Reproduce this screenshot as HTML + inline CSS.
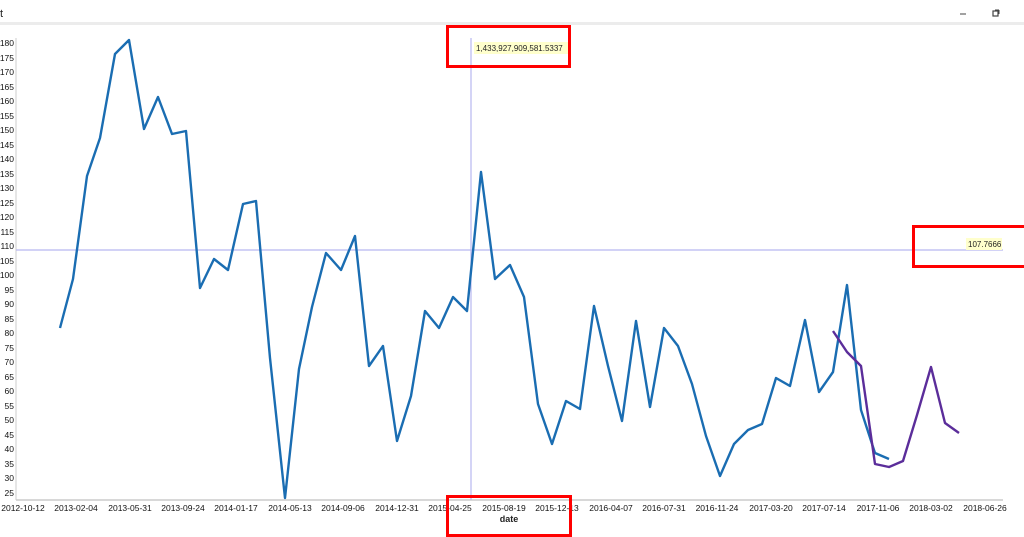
<!DOCTYPE html>
<html><head><style>
html,body{margin:0;padding:0;width:1024px;height:537px;overflow:hidden;background:#fff;font-family:"Liberation Sans",Arial,sans-serif}
</style></head><body>
<svg width="1024" height="537" xmlns="http://www.w3.org/2000/svg" style="position:absolute;left:0;top:0">
<text x="0" y="17" font-size="11" fill="#222">t</text>
<rect x="0" y="22" width="1024" height="3" fill="#ececec"/>
<line x1="960" y1="14" x2="966" y2="14" stroke="#444" stroke-width="1"/>
<rect x="993" y="11" width="5" height="5" fill="none" stroke="#444" stroke-width="1.2"/>
<line x1="995" y1="10" x2="999" y2="10" stroke="#444"/><line x1="999" y1="10" x2="999" y2="14" stroke="#444"/>
<g font-size="8.5" fill="#111" text-anchor="end" font-family="Liberation Sans,Arial,sans-serif">
<text x="14" y="46">180</text><text x="14" y="61">175</text><text x="14" y="75">170</text><text x="14" y="90">165</text><text x="14" y="104">160</text><text x="14" y="119">155</text><text x="14" y="133">150</text><text x="14" y="148">145</text><text x="14" y="162">140</text><text x="14" y="177">135</text><text x="14" y="191">130</text><text x="14" y="206">125</text><text x="14" y="220">120</text><text x="14" y="235">115</text><text x="14" y="249">110</text><text x="14" y="264">105</text><text x="14" y="278">100</text><text x="14" y="293">95</text><text x="14" y="307">90</text><text x="14" y="322">85</text><text x="14" y="336">80</text><text x="14" y="351">75</text><text x="14" y="365">70</text><text x="14" y="380">65</text><text x="14" y="394">60</text><text x="14" y="409">55</text><text x="14" y="423">50</text><text x="14" y="438">45</text><text x="14" y="452">40</text><text x="14" y="467">35</text><text x="14" y="481">30</text><text x="14" y="496">25</text>
</g>
<line x1="16" y1="38" x2="16" y2="500" stroke="#ccc"/>
<line x1="16" y1="500" x2="1003" y2="500" stroke="#ccc" stroke-width="1.5"/>
<g font-size="8.5" fill="#111" text-anchor="middle">
<text x="23" y="511">2012-10-12</text><text x="76" y="511">2013-02-04</text><text x="130" y="511">2013-05-31</text><text x="183" y="511">2013-09-24</text><text x="236" y="511">2014-01-17</text><text x="290" y="511">2014-05-13</text><text x="343" y="511">2014-09-06</text><text x="397" y="511">2014-12-31</text><text x="450" y="511">2015-04-25</text><text x="504" y="511">2015-08-19</text><text x="557" y="511">2015-12-13</text><text x="611" y="511">2016-04-07</text><text x="664" y="511">2016-07-31</text><text x="717" y="511">2016-11-24</text><text x="771" y="511">2017-03-20</text><text x="824" y="511">2017-07-14</text><text x="878" y="511">2017-11-06</text><text x="931" y="511">2018-03-02</text><text x="985" y="511">2018-06-26</text>
</g>
<text x="509" y="522" font-size="9" font-weight="bold" fill="#222" text-anchor="middle">date</text>
<line x1="471" y1="38" x2="471" y2="500" stroke="#b8b8f0" stroke-width="1.2"/>
<line x1="16" y1="250" x2="1003" y2="250" stroke="#b8b8f0" stroke-width="1.2"/>
<polyline fill="none" stroke="#1a6db2" stroke-width="2.4" stroke-linejoin="round" points="60,328 73,279 87,176 100,138 115,54 129,40 144,129 158,97 172,134 186,131 200,288 214,259 228,270 243,204 256,201 270,358 285,498 299,369 312,307 326,253 341,270 355,236 369,366 383,346 397,441 411,396 425,311 439,328 453,297 467,311 481,172 495,279 510,265 524,297 538,404 552,444 566,401 580,409 594,306 608,366 622,421 636,321 650,407 664,328 678,346 692,384 706,436 720,476 734,444 748,430 762,424 776,378 790,386 805,320 819,392 833,372 847,285 861,410 875,453 889,459"/>
<polyline fill="none" stroke="#5b2d9a" stroke-width="2.4" stroke-linejoin="round" points="833,331 847,352 861,366 875,464 889,467 903,461 917,415 931,367 945,423 959,433"/>
<rect x="474" y="42" width="94" height="12" fill="#ffffcc"/>
<text x="476" y="51" font-size="8" fill="#222">1,433,927,909,581.5337</text>
<rect x="966" y="238" width="36" height="12" fill="#ffffcc"/>
<text x="968" y="247" font-size="8" fill="#222">107.7666</text>
<rect x="447.5" y="26.5" width="122" height="40" fill="none" stroke="#f00" stroke-width="3"/>
<rect x="913.5" y="226.5" width="114" height="40" fill="none" stroke="#f00" stroke-width="3"/>
<rect x="447.5" y="496.5" width="123" height="39" fill="none" stroke="#f00" stroke-width="3"/>
</svg>
</body></html>
